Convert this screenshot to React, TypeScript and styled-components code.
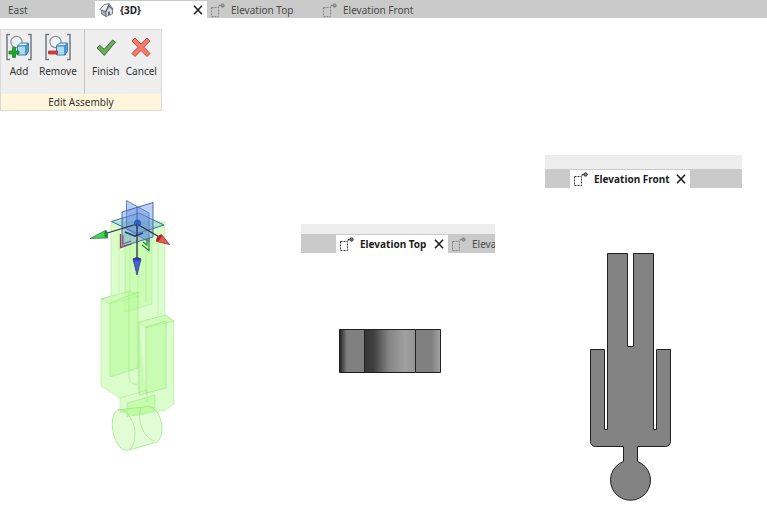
import React from "react";
import styled, { createGlobalStyle } from "styled-components";

const Global = createGlobalStyle`
  * { box-sizing: border-box; }
  body { margin: 0; background: #fff; color: #333; font: 10px/14px "Noto Sans", "Open Sans", sans-serif; }
  button { font: inherit; color: inherit; background: none; border: 0; padding: 0; }
  svg { display: block; }
`;

const TabBar = styled.nav<{ $indent?: number; $top?: boolean }>`
  display: flex;
  height: ${(p) => (p.$top ? 18 : 19)}px;
  padding-left: ${(p) => p.$indent ?? 0}px;
  background: #cacaca;
  overflow: hidden;
`;

const Tab = styled.div<{ $active?: boolean; $inset?: number; $width: number }>`
  display: flex;
  flex: 0 0 ${(p) => p.$width}px;
  align-items: center;
  gap: 6px;
  padding: 0 4px 0 ${(p) => p.$inset ?? 4}px;
  margin-top: 1px;
  background: ${(p) => (p.$active ? "#fff" : "transparent")};
  color: ${(p) => (p.$active ? "#1c1c1c" : "#4a4a4a")};
  font-weight: ${(p) => (p.$active ? 700 : 400)};
`;

const TabLabel = styled.button`
  display: flex;
  flex: 1;
  align-items: center;
  gap: 6px;
  font-weight: inherit;
  white-space: nowrap;
`;

const CloseButton = styled.button`
  display: flex;
  flex: none;
`;

const Ribbon = styled.section`
  display: flex;
  flex-direction: column;
  width: fit-content;
  margin-top: 11px;
  border: 1px solid #d9d9d9;
  background: #eee;
`;

const Tools = styled.div`
  display: flex;
  height: 64px;
`;

const ToolGroup = styled.div<{ $divided?: boolean }>`
  display: flex;
  align-items: flex-start;
  gap: 6px;
  padding: ${(p) => (p.$divided ? "3px 4px 0 7px" : "3px 7px 0 4px")};
  border-left: ${(p) => (p.$divided ? "1px solid #c4c4c4" : "0")};
`;

const Tool = styled.button`
  display: flex;
  flex-direction: column;
  align-items: center;
  gap: 3px;
`;

const RibbonTitle = styled.h2`
  margin: 0;
  padding: 1px 0;
  background: #fff6dc;
  font-size: 10px;
  font-weight: 400;
  line-height: 14px;
  text-align: center;
`;

const Workspace = styled.main`
  display: grid;
  grid-template-columns: 301fr 194fr 50fr 197fr 25fr;
  align-items: start;
`;

const Viewport = styled.section<{ $column: number; $top: number }>`
  grid-column: ${(p) => p.$column};
  min-width: 0;
  padding-top: ${(p) => p.$top}px;
`;

const WindowEdge = styled.div<{ $height: number }>`
  height: ${(p) => p.$height}px;
  background: #ededed;
`;

const Drawing = styled.div<{ $top: number; $left: number }>`
  padding: ${(p) => p.$top}px 0 0 ${(p) => p.$left}px;
`;

const ElevationIcon = ({ active }: { active?: boolean }) => (
  <svg width="14" height="14" viewBox="0 0 14 14" fill="none" stroke={active ? "#3c3c3c" : "#858585"}>
    <path d="M.5 4.500h7v9h-7z" strokeDasharray="2 1" />
    <path d="M8 4V2.500h3" />
    <circle cx="11.500" cy="2.500" r="1.700" fill={active ? "#777" : "#949494"} />
  </svg>
);

const HouseIcon = () => (
  <svg width="15" height="14" viewBox="0 0 15 14">
    <path d="M2.500 6 7 8v5.500L2.500 11z" fill="#a9adb8" stroke="#555a66" strokeWidth=".7" />
    <path d="m7 8 3-4.500L13.500 6v5L7 13.500z" fill="#dcdfe5" stroke="#555a66" strokeWidth=".7" />
    <path d="m.8 6.500 4.400-5 5-.7L6.800 8.500z" fill="#eef0f3" stroke="#606570" strokeWidth=".8" />
    <path d="m10.200.8 4 5.400-1 .6-3.200-3.600L7.300 8.500l-.5-.2z" fill="#868c99" stroke="#555a66" strokeWidth=".6" />
    <path d="m9 9 2-.7v3.500l-2 .8z" fill="#606675" />
  </svg>
);

const CloseIcon = () => (
  <svg width="10" height="10" viewBox="0 0 10 10" stroke="#222" strokeWidth="1.600">
    <path d="m1 .7 8 8.600M9 .7 1 9.300" />
  </svg>
);

const AssemblyIcon = ({ remove }: { remove?: boolean }) => (
  <svg width="28" height="28" viewBox="0 0 28 28">
    <path d="M5 1.500H2v25h3M23 1.500h3v25h-3" fill="none" stroke="#737983" strokeWidth="1.500" />
    <circle cx="11.500" cy="9" r="5.600" fill="#edf1f5" stroke="#8c929b" strokeWidth="1.200" />
    <path d="m12.500 13 3-3h8l-2.500 3z" fill="#dcf3fd" stroke="#3b80b7" strokeLinejoin="round" />
    <path d="M12.500 13H21v9h-8.500z" fill="#acdcf5" stroke="#3b80b7" strokeLinejoin="round" />
    <path d="m21 13 2.500-3v8.500L21 22z" fill="#5ba4d8" stroke="#3b80b7" strokeLinejoin="round" />
    {remove ? (
      <path d="M4.500 18h9v3h-9z" fill="#e13c40" stroke="#a7242a" strokeWidth=".7" />
    ) : (
      <path d="M7.500 14.500h3V18H14v3h-3.500v3.500h-3V21H4v-3h3.500z" fill="#20a52a" stroke="#137a1c" strokeWidth=".7" />
    )}
  </svg>
);

const FinishIcon = () => (
  <svg width="28" height="28" viewBox="0 0 28 28">
    <path d="m5 15 2.700-2.700 4.500 4L20.500 7 23.500 9 12.300 22.500z" fill="#6bab59" stroke="#3f7137" strokeLinejoin="round" />
  </svg>
);

const CancelIcon = () => (
  <svg width="28" height="28" viewBox="0 0 28 28">
    <path d="m5 8 3-3 6 6 6-6 3 3-6 6.300 6 6.200-3 3-6-6-6 6-3-3 6-6.200z" fill="#f17c6c" stroke="#c34d43" strokeLinejoin="round" />
  </svg>
);

const AssemblyModel = () => (
  <svg width="100" height="260" viewBox="80 195 100 260" role="img" aria-label="3D assembly">
    <g fill="#b4fb94" stroke="#86d76b" strokeLinejoin="round" strokeWidth=".7">
      <path d="M111 222h54v94l9 5v83l-9 6-30 6-15-4v-14l-19-12v-87l10-3z" fillOpacity=".48" strokeOpacity=".5" />
      <path d="M125 222h27v82l-27 8z" fillOpacity=".38" strokeOpacity=".4" />
      <path d="M119 225v68M130 225v66M138 225v165M146 225v77M158 225v91" fill="none" strokeOpacity=".35" />
      <path d="m101 299 29-8 8 5-28 8z" fillOpacity=".25" strokeOpacity=".5" />
      <path d="M110 303v74l28-9v-76z" fillOpacity=".55" strokeOpacity=".5" />
      <path d="m139 322 27-7 8 6-28 7z" fillOpacity=".3" strokeOpacity=".6" />
      <path d="M139 322v73l27-7v-67l-20 6v68" fillOpacity=".45" strokeOpacity=".6" />
      <path d="m127 403 28-8v15l-28 7z" fillOpacity=".55" strokeOpacity=".5" />
      <path d="m120 398 27-8v12m-27 10 7-2m2-118v85c1 6 5 8 9 7" fill="none" strokeOpacity=".45" />
      <path d="M118 410c-9 3-7 30 3 38 2 2 5 3 8 2l28-8c8-6 6-27-4-34-3-2-6-2-9-1z" fillOpacity=".38" strokeOpacity=".8" />
      <path d="M118 410c8-2 17 11 17 24 0 8-2 13-6 16m12-42c-4 8 0 28 13 33" fill="none" strokeOpacity=".7" />
    </g>
    <path d="M120.500 234v13.500l11-3.500M123 235v9l8-3" fill="none" stroke="#a33d31" strokeWidth="1.300" />
    <path d="m142 245 7 5.500V238m-6 4 4 3v-6" fill="none" stroke="#2b8340" strokeWidth="1.200" />
    <path d="m111.500 221.500 27.500-8.500 25 12-27 8.500z" fill="#82c5d9" fillOpacity=".45" stroke="#386e99" />
    <path d="m126.500 200.500 22.500 12.500v29l-22.500-13z" fill="#5582dc" fillOpacity=".4" stroke="#4968b2" strokeWidth=".8" />
    <path d="m122 212 31-9.500V237l-31 9.500z" fill="#628de0" fillOpacity=".42" stroke="#3c61a3" strokeWidth=".9" />
    <path d="M137 207v22" stroke="#3454a5" strokeWidth=".8" />
    <path d="m125 232 10 4 8-3" fill="none" stroke="#233d82" strokeWidth="1.800" />
    <path d="m137 224-33 10M137 224l24 14M137 224v35" stroke="#303039" strokeWidth="1.300" />
    <circle cx="137.500" cy="223" r="3.500" fill="#2955b5" fillOpacity=".85" />
    <path d="m90 238.500 15.500-8q3 2 2 7.500z" fill="#43d45b" stroke="#246f33" strokeWidth=".7" />
    <ellipse cx="106" cy="234" rx="1.600" ry="3.800" fill="#208b38" />
    <path d="m169.500 244.500-13-3q0-5 5-7z" fill="#e65a50" stroke="#7e2424" strokeWidth=".7" />
    <ellipse cx="159" cy="238" rx="1.700" ry="3.700" transform="rotate(35 159 238)" fill="#a82429" />
    <path d="m133 259 4 16 4-16q-4-3-8 0z" fill="#4861d5" stroke="#263780" strokeWidth=".7" />
    <ellipse cx="137" cy="259" rx="3.800" ry="1.500" fill="#2e3f9d" />
  </svg>
);

const TopElevation = () => (
  <svg width="103" height="45" viewBox="0 0 103 45" role="img" aria-label="Top elevation">
    <defs>
      <linearGradient id="leftArm"><stop stopColor="#202020" /><stop offset=".3" stopColor="#808080" /></linearGradient>
      <linearGradient id="head"><stop offset=".05" stopColor="#383838" /><stop offset=".18" stopColor="#404040" /><stop offset=".48" stopColor="#858585" /><stop offset=".8" stopColor="#a0a0a0" /><stop offset="1" stopColor="#929292" /></linearGradient>
      <linearGradient id="rightArm"><stop offset=".65" stopColor="#808080" /><stop offset="1" stopColor="#a4a4a4" /></linearGradient>
    </defs>
    <g stroke="#202020">
      <path d="M.5.5h25v43H.5z" fill="url(#leftArm)" />
      <path d="M25.500.5h51v43h-51z" fill="url(#head)" />
      <path d="M76.500.5h25v43h-25z" fill="url(#rightArm)" />
    </g>
  </svg>
);

const FrontElevation = () => (
  <svg width="83" height="249" viewBox="589 252 83 249" role="img" aria-label="Front elevation">
    <path d="M607.500 253.500h20v93h6v-93h20v176h3v-80h14v92a5 5 0 0 1-5 5h-28v15a20 20 0 1 1-14 0v-15h-28a5 5 0 0 1-5-5v-92h14v80h3z" fill="#838383" stroke="#202020" />
  </svg>
);

export default function App() {
  return (
    <>
      <Global />
      <TabBar $top aria-label="Open views">
        <Tab $width={95} $inset={8}><TabLabel>East</TabLabel></Tab>
        <Tab $width={112} $active><TabLabel><HouseIcon />{"{3D}"}</TabLabel><CloseButton aria-label="Close 3D"><CloseIcon /></CloseButton></Tab>
        <Tab $width={112}><TabLabel><ElevationIcon />Elevation Top</TabLabel></Tab>
        <Tab $width={112}><TabLabel><ElevationIcon />Elevation Front</TabLabel></Tab>
      </TabBar>
      <Ribbon>
        <Tools>
          <ToolGroup>
            <Tool><AssemblyIcon />Add</Tool>
            <Tool><AssemblyIcon remove />Remove</Tool>
          </ToolGroup>
          <ToolGroup $divided>
            <Tool><FinishIcon />Finish</Tool>
            <Tool><CancelIcon />Cancel</Tool>
          </ToolGroup>
        </Tools>
        <RibbonTitle>Edit Assembly</RibbonTitle>
      </Ribbon>
      <Workspace>
        <Viewport $column={1} $top={84}>
          <Drawing $top={0} $left={80}><AssemblyModel /></Drawing>
        </Viewport>
        <Viewport $column={2} $top={113}>
          <WindowEdge $height={10} />
          <TabBar $indent={35} aria-label="Top view tabs">
            <Tab $width={112} $active><TabLabel><ElevationIcon active />Elevation Top</TabLabel><CloseButton aria-label="Close Elevation Top"><CloseIcon /></CloseButton></Tab>
            <Tab $width={112}><TabLabel><ElevationIcon />Elevation Front</TabLabel></Tab>
          </TabBar>
          <Drawing $top={76} $left={38}><TopElevation /></Drawing>
        </Viewport>
        <Viewport $column={4} $top={44}>
          <WindowEdge $height={14} />
          <TabBar $indent={25} aria-label="Front view tabs">
            <Tab $width={120} $active><TabLabel><ElevationIcon active />Elevation Front</TabLabel><CloseButton aria-label="Close Elevation Front"><CloseIcon /></CloseButton></Tab>
          </TabBar>
          <Drawing $top={64} $left={44}><FrontElevation /></Drawing>
        </Viewport>
      </Workspace>
    </>
  );
}
